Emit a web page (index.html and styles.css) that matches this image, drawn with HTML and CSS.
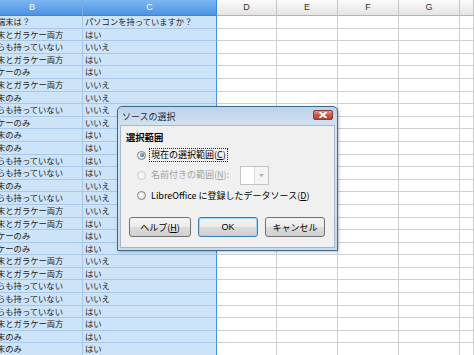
FILE: index.html
```html
<!DOCTYPE html>
<html lang="ja">
<head>
<meta charset="utf-8">
<link rel="stylesheet" href="styles.css">
</head>
<body>
<div class="sheet">
  <div class="row head">
    <span class="h sel hb">B</span><span class="h sel hc">C</span><span class="h">D</span><span class="h">E</span><span class="h">F</span><span class="h">G</span><span class="h"></span>
  </div>
  <div class="row"><span class="b">端末は？</span><span class="cc">パソコンを持っていますか？</span><i></i><i></i><i></i><i></i><i></i></div>
  <div class="row"><span class="b">末とガラケー両方</span><span class="cc">はい</span><i></i><i></i><i></i><i></i><i></i></div>
  <div class="row"><span class="b">らも持っていない</span><span class="cc">いいえ</span><i></i><i></i><i></i><i></i><i></i></div>
  <div class="row"><span class="b">末とガラケー両方</span><span class="cc">はい</span><i></i><i></i><i></i><i></i><i></i></div>
  <div class="row"><span class="b">ケーのみ</span><span class="cc">はい</span><i></i><i></i><i></i><i></i><i></i></div>
  <div class="row"><span class="b">末とガラケー両方</span><span class="cc">いいえ</span><i></i><i></i><i></i><i></i><i></i></div>
  <div class="row"><span class="b">末のみ</span><span class="cc">いいえ</span><i></i><i></i><i></i><i></i><i></i></div>
  <div class="row"><span class="b">らも持っていない</span><span class="cc">いいえ</span><i></i><i></i><i></i><i></i><i></i></div>
  <div class="row"><span class="b">ケーのみ</span><span class="cc">いいえ</span><i></i><i></i><i></i><i></i><i></i></div>
  <div class="row"><span class="b">末のみ</span><span class="cc">はい</span><i></i><i></i><i></i><i></i><i></i></div>
  <div class="row"><span class="b">末のみ</span><span class="cc">はい</span><i></i><i></i><i></i><i></i><i></i></div>
  <div class="row"><span class="b">らも持っていない</span><span class="cc">はい</span><i></i><i></i><i></i><i></i><i></i></div>
  <div class="row"><span class="b">らも持っていない</span><span class="cc">はい</span><i></i><i></i><i></i><i></i><i></i></div>
  <div class="row"><span class="b">末のみ</span><span class="cc">いいえ</span><i></i><i></i><i></i><i></i><i></i></div>
  <div class="row"><span class="b">らも持っていない</span><span class="cc">いいえ</span><i></i><i></i><i></i><i></i><i></i></div>
  <div class="row"><span class="b">末とガラケー両方</span><span class="cc">いいえ</span><i></i><i></i><i></i><i></i><i></i></div>
  <div class="row"><span class="b">末とガラケー両方</span><span class="cc">はい</span><i></i><i></i><i></i><i></i><i></i></div>
  <div class="row"><span class="b">ケーのみ</span><span class="cc">はい</span><i></i><i></i><i></i><i></i><i></i></div>
  <div class="row"><span class="b">ケーのみ</span><span class="cc">はい</span><i></i><i></i><i></i><i></i><i></i></div>
  <div class="row"><span class="b">末とガラケー両方</span><span class="cc">いいえ</span><i></i><i></i><i></i><i></i><i></i></div>
  <div class="row"><span class="b">末とガラケー両方</span><span class="cc">はい</span><i></i><i></i><i></i><i></i><i></i></div>
  <div class="row"><span class="b">らも持っていない</span><span class="cc">いいえ</span><i></i><i></i><i></i><i></i><i></i></div>
  <div class="row"><span class="b">らも持っていない</span><span class="cc">いいえ</span><i></i><i></i><i></i><i></i><i></i></div>
  <div class="row"><span class="b">らも持っていない</span><span class="cc">はい</span><i></i><i></i><i></i><i></i><i></i></div>
  <div class="row"><span class="b">末とガラケー両方</span><span class="cc">はい</span><i></i><i></i><i></i><i></i><i></i></div>
  <div class="row"><span class="b">末のみ</span><span class="cc">はい</span><i></i><i></i><i></i><i></i><i></i></div>
  <div class="row"><span class="b">末のみ</span><span class="cc">はい</span><i></i><i></i><i></i><i></i><i></i></div>
</div>

<div class="dialog">
  <div class="titlebar">
    <span class="title">ソースの選択</span>
    <span class="close"><svg width="8" height="6" viewBox="0 0 8 6"><path d="M1 0.5 L7 5.5 M7 0.5 L1 5.5" stroke="#fff" stroke-width="1.8" stroke-linecap="round"/></svg></span>
  </div>
  <div class="body">
    <div class="group">選択範囲</div>
    <div class="opt"><span class="radio checked"></span><span class="label focus">現在の選択範囲(<u>C</u>)</span></div>
    <div class="opt disabled"><span class="radio"></span><span class="label">名前付きの範囲(<u>N</u>):</span><span class="combo"><span class="field"></span><span class="drop"><svg width="5" height="3" viewBox="0 0 5 3"><path d="M0 0 H5 L2.5 3 Z" fill="#b0b0b0"/></svg></span></span></div>
    <div class="opt third"><span class="radio"></span><span class="label">LibreOffice に登録したデータソース(<u>D</u>)</span></div>
    <div class="buttons">
      <span class="btn help">ヘルプ(<u>H</u>)</span>
      <span class="btn ok">OK</span>
      <span class="btn cancel">キャンセル</span>
    </div>
  </div>
</div>
</body>
</html>
```
FILE: styles.css
```css
html, body {
  margin: 0;
  padding: 0;
}
body {
  width: 474px;
  height: 355px;
  overflow: hidden;
  position: relative;
  background: #fff;
  font-family: "Noto Sans CJK JP", "Noto Sans", sans-serif;
  color: #1a1a1a;
}

.sheet {
  display: flex;
  flex-direction: column;
}
.row {
  display: grid;
  grid-template-columns: 83px 134px 60px 61px 61px 61px 14px;
  height: 12.6px;
}
.row.head {
  height: 16px;
}
.row > span, .row > i {
  box-sizing: border-box;
  display: block;
  overflow: hidden;
  white-space: nowrap;
  border-right: 1px solid #cfcfcf;
  border-bottom: 1px solid #cfcfcf;
}
.b, .cc {
  background: #cde3f8;
  border-color: #a9c8e8 !important;
  font-size: 8.3px;
  line-height: 11.6px;
  color: #222;
}
.b {
  text-indent: -3px;
}
.cc {
  padding-left: 2px;
  border-right: 1px solid #4a8fdc !important;
}

.h {
  background: linear-gradient(#fbfbfb, #e4e4e4);
  border-right-color: #c4c4c4 !important;
  border-bottom-color: #b4b4b4 !important;
  font-family: "Liberation Sans", sans-serif;
  font-size: 9px;
  line-height: 15px;
  text-align: center;
  color: #333;
}
.h.sel {
  background: linear-gradient(#7db7f2, #4b93e3);
  color: #fff;
  border-right-color: #7aa9dc !important;
  border-bottom-color: #3f84d4 !important;
}
.h.hc {
  border-right-color: #3e86d6 !important;
}
.h.hb {
  text-align: left;
  padding-left: 29px;
}

/* dialog */
.dialog {
  position: absolute;
  left: 117px;
  top: 106px;
  width: 221px;
  height: 145px;
  box-sizing: border-box;
  border: 1px solid #3d6b87;
  border-radius: 5px 5px 0 0;
  background: linear-gradient(#bcd2e9, #d5e3f1 20px, #cbdaea);
  box-shadow: 1px 1px 3px rgba(0,0,0,0.25);
  display: flex;
  flex-direction: column;
  font-size: 9px;
  color: #000;
}
.titlebar {
  height: 18px;
  display: flex;
  align-items: center;
  padding: 0 4px 0 4px;
}
.title {
  flex: 1;
  font-size: 9px;
  color: #1e2a36;
  padding-top: 1px;
}
.close {
  width: 20px;
  height: 10px;
  margin-top: -2px;
  box-sizing: border-box;
  border: 1px solid #8a3a32;
  border-radius: 2px;
  background: linear-gradient(#e3948a, #c9594c 50%, #b84436);
  display: flex;
  align-items: center;
  justify-content: center;
}
.body {
  flex: 1;
  margin: 0 2px 2px;
  background: #f0f0f0;
  border: 1px solid #a4b8cc;
  padding: 5px 0 0 5px;
  display: flex;
  flex-direction: column;
}
.group {
  font-weight: bold;
  line-height: 12px;
  font-size: 9.3px;
  color: #000;
}
.opt {
  height: 20px;
  display: flex;
  align-items: center;
  padding-left: 11px;
  color: #000;
}
.group + .opt {
  margin-top: 2px;
}
.opt.third {
  height: 21px;
}
.radio {
  width: 9px;
  height: 9px;
  box-sizing: border-box;
  border-radius: 50%;
  border: 1px solid #7f8182;
  background: radial-gradient(circle at 40% 40%, #ffffff, #d6d6d6);
  margin-right: 3px;
  position: relative;
}
.radio.checked::after {
  content: "";
  position: absolute;
  left: 1.5px;
  top: 1.5px;
  width: 4px;
  height: 4px;
  border-radius: 50%;
  background: radial-gradient(circle at 40% 40%, #8bbbe8, #1f4f80);
}
.disabled .radio {
  border-color: #cacaca;
  background: #f4f4f4;
}
.label {
  line-height: 12px;
  padding: 0 1px;
  border: 1px solid transparent;
  color: #000;
}
.label.focus {
  border: 1px dotted #222;
}
.disabled .label {
  color: #a3a3a3;
}
u {
  text-decoration: underline;
  text-underline-offset: 1px;
}
.combo {
  margin-left: 9px;
  width: 29px;
  height: 19px;
  box-sizing: border-box;
  border: 1px solid #c2c2c2;
  background: #fff;
  display: flex;
}
.combo .field {
  flex: 1;
}
.combo .drop {
  width: 13px;
  border-left: 1px solid #dedede;
  background: #f4f4f4;
  display: flex;
  align-items: center;
  justify-content: center;
}
.buttons {
  display: flex;
  gap: 7px;
  margin-top: 11px;
  padding-left: 3px;
}
.btn {
  height: 20px;
  box-sizing: border-box;
  border: 1px solid #707070;
  border-radius: 3px;
  background: linear-gradient(#f4f4f4, #ebebeb 50%, #dcdcdc 51%, #cfcfcf);
  display: flex;
  align-items: center;
  justify-content: center;
  font-size: 9px;
  color: #000;
}
.btn.help { width: 62px; }
.btn.ok {
  width: 60px;
  border-color: #3c7fb1;
  box-shadow: inset 0 0 0 1px #9fd5f5;
  font-family: "Liberation Sans", "Noto Sans CJK JP", sans-serif;
}
.btn.cancel { width: 60px; }
```
